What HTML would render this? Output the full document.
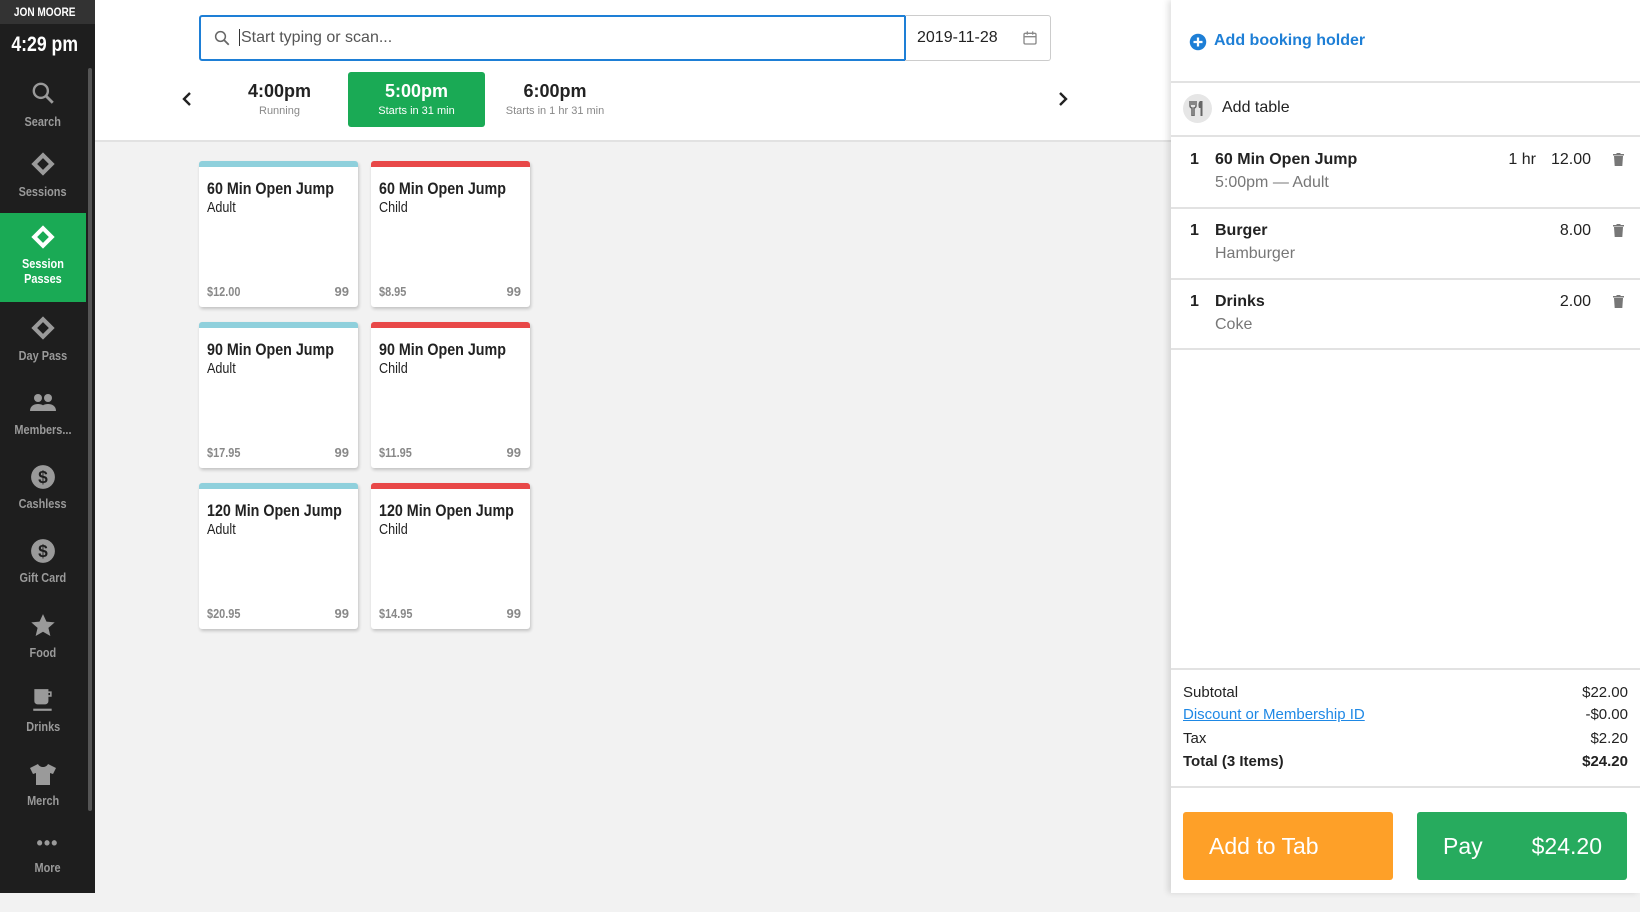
<!DOCTYPE html>
<html><head><meta charset="utf-8"><style>
*{box-sizing:border-box;margin:0;padding:0}
body{width:1640px;height:893px;overflow:hidden;background:#f2f2f2;font-family:"Liberation Sans",sans-serif;position:relative;color:#222}
.cn{display:inline-block;transform:scaleX(.84);white-space:nowrap}
.cl{display:inline-block;transform:scaleX(.84);transform-origin:0 0;white-space:nowrap}
#side{position:absolute;left:0;top:0;width:95px;height:893px;background:#1e1e1e}
#side .hd{height:24px;background:#333;color:#fff;font-weight:bold;font-size:12px;text-align:center;line-height:24px;padding-right:6px}
#side .tm{height:46px;color:#fff;font-weight:bold;font-size:21px;text-align:center;line-height:42px;padding-right:6px}
.it{position:absolute;left:0;width:86px;height:74px;text-align:center;color:#9a9a9a;font-weight:bold;font-size:13px}
.it svg{display:block;margin:0 auto}
.it.act{background:#1aaa55;color:#fff;height:89px}
.sb{position:absolute;left:88px;top:68px;width:4px;height:743px;background:#555;border-radius:2px}
#top{position:absolute;left:95px;top:0;width:1076px;height:142px;background:#fff;border-bottom:2px solid #e2e2e2}
.search{position:absolute;left:104px;top:15px;width:707px;height:46px;border:2px solid #1e7fd6;border-radius:3px 0 0 3px}
.search span{position:absolute;left:38px;top:12px;font-size:16px;color:#555}
.date{position:absolute;left:810px;top:15px;width:146px;height:46px;border:1px solid #ccc;border-left:none;border-radius:0 3px 3px 0;font-size:16px;padding:13px 0 0 12px}
.tab{position:absolute;top:72px;height:55px;width:137px;text-align:center;border-radius:3px}
.tab b{display:block;font-size:18px;margin-top:9px}
.tab small{display:block;font-size:11px;color:#888;margin-top:3px}
.tab.g{background:#1aaa55;color:#fff}.tab.g small{color:#fff}
.card{position:absolute;width:159px;height:146px;background:#fff;border-top:6px solid #8fd0dc;box-shadow:1px 2px 3px rgba(0,0,0,.2);border-radius:3px}
.card.r{border-top-color:#e84848}
.card .t{position:absolute;left:8px;top:12px;font-weight:bold;font-size:17px;color:#222}
.card .s{position:absolute;left:8px;top:32px;font-size:15px;color:#222}
.card .p{position:absolute;left:8px;bottom:8px;font-weight:bold;font-size:13px;color:#888}
.card .q{position:absolute;right:9px;bottom:8px;font-size:13px;color:#888;font-weight:bold}
#rp{position:absolute;left:1171px;top:0;width:469px;height:893px;background:#fff;box-shadow:-3px 0 6px rgba(0,0,0,.12)}
.ln{position:absolute;left:0;width:469px;height:2px;background:#e2e2e2}
.row{position:absolute;left:0;width:469px;font-size:16px}
.row .n{position:absolute;left:19px;top:0;font-weight:bold}
.row .nm{position:absolute;left:44px;top:0;font-weight:bold}
.row .sub{position:absolute;left:44px;top:23px;color:#777}
.row .pr{position:absolute;right:49px;top:0}
.row .tr{position:absolute;right:16px;top:2px}
.sum{position:absolute;left:12px;width:445px;font-size:15px}
.sum span{position:absolute;right:0}
.btn{position:absolute;top:812px;height:68px;width:210px;border-radius:3px;color:#fff;font-size:23px;line-height:68px}
</style></head><body>
<div id="side">
<div class="hd"><span class="cn">JON MOORE</span></div>
<div class="tm"><span class="cn">4:29 pm</span></div>
<div class="it" style="top:76px"><svg width="26" height="26" viewBox="0 0 24 24" style="margin-top:4px"><circle cx="10" cy="10" r="6.5" fill="none" stroke="#9a9a9a" stroke-width="2.2"/><path d="M15 15l6 6" stroke="#9a9a9a" stroke-width="2.6"/></svg><div style="margin-top:8px"><span class="cn">Search</span></div></div>
<div class="it" style="top:150px"><svg width="30" height="28" viewBox="0 0 24 24"><path d="M12 2l10 10-10 10L2 12z" fill="#9a9a9a"/><path d="M12 7l5 5-5 5-5-5z" fill="#1e1e1e"/></svg><div style="margin-top:6px"><span class="cn">Sessions</span></div></div>
<div class="it act" style="top:213px"><svg width="30" height="28" viewBox="0 0 24 24" style="margin-top:10px"><path d="M12 2l10 10-10 10L2 12z" fill="#fff"/><path d="M12 7l5 5-5 5-5-5z" fill="#1aaa55"/></svg><div style="margin-top:5px;line-height:15px"><span class="cn">Session<br>Passes</span></div></div>
<div class="it" style="top:314px"><svg width="30" height="28" viewBox="0 0 24 24"><path d="M12 2l10 10-10 10L2 12z" fill="#9a9a9a"/><path d="M12 7l5 5-5 5-5-5z" fill="#1e1e1e"/></svg><div style="margin-top:6px"><span class="cn">Day Pass</span></div></div>
<div class="it" style="top:392px"><svg width="28" height="22" viewBox="0 0 28 22"><circle cx="9" cy="6" r="4" fill="#9a9a9a"/><circle cx="19" cy="6" r="4" fill="#9a9a9a"/><path d="M1 19c0-5 4-7 8-7s8 2 8 7zM11 19c0-5 4-7 8-7s8 2 8 7z" fill="#9a9a9a"/></svg><div style="margin-top:8px"><span class="cn">Members...</span></div></div>
<div class="it" style="top:464px"><svg width="26" height="26" viewBox="0 0 24 24"><circle cx="12" cy="12" r="11" fill="#9a9a9a"/><text x="12" y="17.5" text-anchor="middle" font-size="16" font-weight="bold" fill="#1e1e1e" font-family="Liberation Sans">$</text></svg><div style="margin-top:6px"><span class="cn">Cashless</span></div></div>
<div class="it" style="top:538px"><svg width="26" height="26" viewBox="0 0 24 24"><circle cx="12" cy="12" r="11" fill="#9a9a9a"/><text x="12" y="17.5" text-anchor="middle" font-size="16" font-weight="bold" fill="#1e1e1e" font-family="Liberation Sans">$</text></svg><div style="margin-top:6px"><span class="cn">Gift Card</span></div></div>
<div class="it" style="top:613px"><svg width="26" height="26" viewBox="0 0 24 24"><path d="M12 1l3.2 7 7.6.7-5.8 5 1.8 7.5L12 17.3 5.2 21.2 7 13.7l-5.8-5 7.6-.7z" fill="#9a9a9a"/></svg><div style="margin-top:6px"><span class="cn">Food</span></div></div>
<div class="it" style="top:687px"><svg width="26" height="26" viewBox="0 0 24 24"><path d="M4 2h13v11a3 3 0 0 1-3 3H7a3 3 0 0 1-3-3zM17 4h3v5h-3z" fill="#9a9a9a"/><rect x="3" y="20" width="17" height="2" fill="#9a9a9a"/><rect x="17" y="5.5" width="1.5" height="2" fill="#1e1e1e"/></svg><div style="margin-top:6px"><span class="cn">Drinks</span></div></div>
<div class="it" style="top:761px"><svg width="28" height="26" viewBox="0 0 28 24"><path d="M9 2l-8 4 3 6 3-1v12h14V11l3 1 3-6-8-4c-1 2-3 3-5 3s-4-1-5-3z" fill="#9a9a9a"/></svg><div style="margin-top:6px"><span class="cn">Merch</span></div></div>
<div class="it" style="top:838px;width:95px"><div style="font-size:18px;letter-spacing:1px;line-height:10px">•••</div><div style="margin-top:12px"><span class="cn">More</span></div></div>
<div class="sb"></div>
</div>

<div id="top">
<div class="search"><svg width="18" height="18" viewBox="0 0 24 24" style="position:absolute;left:12px;top:12px"><circle cx="10" cy="10" r="6.5" fill="none" stroke="#666" stroke-width="2"/><path d="M15 15l6 6" stroke="#666" stroke-width="2.4"/></svg><span><span style="position:static;border-left:1px solid #333;margin-right:1px"></span>Start typing or scan...</span></div>
<div class="date">2019-11-28<svg width="16" height="16" viewBox="0 0 24 24" style="position:absolute;right:12px;top:14px"><rect x="3" y="5" width="18" height="16" rx="2" fill="none" stroke="#888" stroke-width="2"/><path d="M3 10h18M8 2v5M16 2v5" stroke="#888" stroke-width="2"/></svg></div>
<svg width="12" height="14" viewBox="0 0 12 14" style="position:absolute;left:86px;top:92px"><path d="M9 1L3 7l6 6" fill="none" stroke="#222" stroke-width="2.4"/></svg>
<div class="tab" style="left:116px"><b>4:00pm</b><small>Running</small></div>
<div class="tab g" style="left:253px"><b>5:00pm</b><small>Starts in 31 min</small></div>
<div class="tab" style="left:392px;width:136px"><b>6:00pm</b><small>Starts in 1 hr 31 min</small></div>
<svg width="12" height="14" viewBox="0 0 12 14" style="position:absolute;left:962px;top:92px"><path d="M3 1l6 6-6 6" fill="none" stroke="#222" stroke-width="2.4"/></svg>
</div>

<div class="card" style="left:199px;top:161px"><div class="t cl">60 Min Open Jump</div><div class="s cl">Adult</div><div class="p cl">$12.00</div><div class="q">99</div></div>
<div class="card r" style="left:371px;top:161px"><div class="t cl">60 Min Open Jump</div><div class="s cl">Child</div><div class="p cl">$8.95</div><div class="q">99</div></div>
<div class="card" style="left:199px;top:322px"><div class="t cl">90 Min Open Jump</div><div class="s cl">Adult</div><div class="p cl">$17.95</div><div class="q">99</div></div>
<div class="card r" style="left:371px;top:322px"><div class="t cl">90 Min Open Jump</div><div class="s cl">Child</div><div class="p cl">$11.95</div><div class="q">99</div></div>
<div class="card" style="left:199px;top:483px"><div class="t cl">120 Min Open Jump</div><div class="s cl">Adult</div><div class="p cl">$20.95</div><div class="q">99</div></div>
<div class="card r" style="left:371px;top:483px"><div class="t cl">120 Min Open Jump</div><div class="s cl">Child</div><div class="p cl">$14.95</div><div class="q">99</div></div>

<div id="rp">
<svg width="18" height="18" viewBox="0 0 24 24" style="position:absolute;left:18px;top:33px"><circle cx="12" cy="12" r="11" fill="#1e7fd6"/><path d="M12 6v12M6 12h12" stroke="#fff" stroke-width="3"/></svg>
<div style="position:absolute;left:43px;top:32px;color:#1e7fd6;font-weight:bold;font-size:16px">Add booking holder</div>
<div class="ln" style="top:81px"></div>
<div style="position:absolute;left:12px;top:94px;width:29px;height:29px;border-radius:50%;background:#e6e6e6"><svg width="17" height="15" viewBox="0 0 17 15" style="position:absolute;left:6px;top:7px"><path d="M1 0v5c0 1 1 2 2 2h0v8h2V7c1 0 2-1 2-2V0M3 0v4M5 0v4" fill="none" stroke="#666" stroke-width="1.5"/><path d="M11 0c-1.5 1-2 4-1 7h1.5v8h2V0z" fill="#666"/></svg></div>
<div style="position:absolute;left:51px;top:99px;font-size:16px">Add table</div>
<div class="ln" style="top:135px"></div>
<div class="row" style="top:151px"><span class="n">1</span><span class="nm">60 Min Open Jump</span><span class="sub">5:00pm — Adult</span><span class="pr"><span style="margin-right:15px">1 hr</span>12.00</span><span class="tr"><svg width="11" height="13" viewBox="0 0 11 13"><path d="M0 1h11v1.5H0zM3.5 0h4v1h-4zM1 3h9l-.7 10H1.7z" fill="#777"/></svg></span></div>
<div class="ln" style="top:207px"></div>
<div class="row" style="top:222px"><span class="n">1</span><span class="nm">Burger</span><span class="sub">Hamburger</span><span class="pr">8.00</span><span class="tr"><svg width="11" height="13" viewBox="0 0 11 13"><path d="M0 1h11v1.5H0zM3.5 0h4v1h-4zM1 3h9l-.7 10H1.7z" fill="#777"/></svg></span></div>
<div class="ln" style="top:278px"></div>
<div class="row" style="top:293px"><span class="n">1</span><span class="nm">Drinks</span><span class="sub">Coke</span><span class="pr">2.00</span><span class="tr"><svg width="11" height="13" viewBox="0 0 11 13"><path d="M0 1h11v1.5H0zM3.5 0h4v1h-4zM1 3h9l-.7 10H1.7z" fill="#777"/></svg></span></div>
<div class="ln" style="top:348px"></div>
<div class="ln" style="top:668px"></div>
<div class="sum" style="top:684px">Subtotal<span>$22.00</span></div>
<div class="sum" style="top:706px"><u style="color:#1e88e5">Discount or Membership ID</u><span>-$0.00</span></div>
<div class="sum" style="top:730px">Tax<span>$2.20</span></div>
<div class="sum" style="top:753px;font-weight:bold">Total (3 Items)<span>$24.20</span></div>
<div class="ln" style="top:786px"></div>
<div class="btn" style="left:12px;background:#fea028;padding-left:26px">Add to Tab</div>
<div class="btn" style="left:246px;background:#27ab5e;padding-left:26px">Pay<span style="position:absolute;right:25px">$24.20</span></div>
</div>
</body></html>
